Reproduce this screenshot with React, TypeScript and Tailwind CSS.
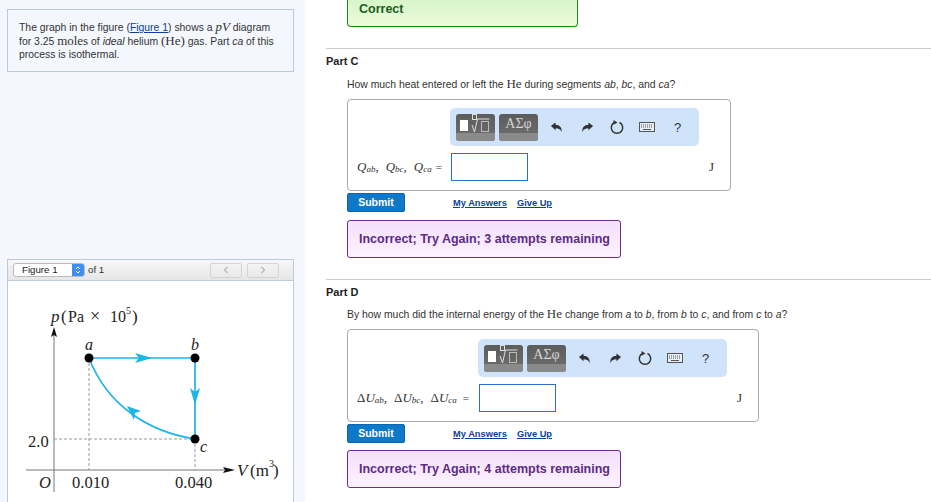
import React from "react";

const serif = "font-['Liberation_Serif',serif]";

function Toolbar() {
  return (
    <div className="h-[38px] w-[249px] rounded-[5px] bg-[#cfe4fb] flex items-center pl-[6px] text-[#333]">
      <div className="w-[39px] h-[27px] rounded-[3px] bg-gradient-to-b from-[#5c5c5c] to-[#707070] relative overflow-hidden">
        <div className="absolute left-0 right-0 bottom-0 h-[8px] bg-[#8a8a8a]" />
        <svg viewBox="0 0 39 27" className="absolute inset-0 w-[39px] h-[27px]">
          <rect x="4" y="6" width="8" height="11" fill="#fff" />
          <rect x="16.500" y=".5" width="4" height="5" fill="none" stroke="#ddd" />
          <path d="M16 11l2.500 7 3-13h12" fill="none" stroke="#ddd" strokeWidth="1" />
          <rect x="25.500" y="7.500" width="7" height="10" fill="none" stroke="#bbb" />
        </svg>
      </div>
      <div className={`ml-[4px] w-[39px] h-[27px] rounded-[3px] bg-gradient-to-b from-[#5c5c5c] to-[#707070] relative overflow-hidden text-center text-[#d5d5d5] text-[14px] leading-[20px] ${serif}`}>
        <div className="absolute left-0 right-0 bottom-0 h-[8px] bg-[#8a8a8a]" />
        <span className="relative">ΑΣφ</span>
      </div>
      <svg viewBox="0 0 14 14" className="ml-[12px] w-[13px] h-[13px]"><path d="M1 5.500L6 1.500v2.500c4.500 0 7 3 6.500 8-1-3-3-4.200-6.500-4.200V10z" fill="#333" /></svg>
      <svg viewBox="0 0 14 14" className="ml-[18px] w-[13px] h-[13px]"><path d="M13 5.500L8 1.500v2.500c-4.500 0-7 3-6.500 8 1-3 3-4.200 6.500-4.200V10z" fill="#333" /></svg>
      <svg viewBox="0 0 16 16" className="ml-[15px] w-[16px] h-[16px]"><path d="M10.500 3.500A5.700 5.700 0 1 1 5.500 3.500" fill="none" stroke="#333" strokeWidth="1.500" /><path d="M4.500 1l4 2.500-4 2.200z" fill="#333" /></svg>
      <svg viewBox="0 0 16 10" className="ml-[14px] w-[16px] h-[10px]"><rect x=".5" y=".5" width="15" height="9" fill="#e8eef5" stroke="#555" /><path d="M2 3h12M2 5h12" stroke="#555" strokeDasharray="1 1" /><path d="M4 7.500h8" stroke="#555" /></svg>
      <span className="ml-[19px] text-[13px] leading-none font-['Liberation_Sans',sans-serif]">?</span>
    </div>
  );
}

function Answer({ label, labelW, w, h, top }: { label: React.ReactNode; labelW: number; w: string; h: string; top: string }) {
  return (
    <div className={`${w} ${h} rounded-[4px] border border-[#aaa] flex flex-col`}>
      <div className={`${top} self-start`} style={{ marginLeft: labelW - 2 }}><Toolbar /></div>
      <div className="mt-[7px] flex items-center">
        <div className={`flex items-center whitespace-nowrap text-[13px] text-[#333] pl-[9px] ${serif}`} style={{ width: labelW - 1 }}>{label}</div>
        <div className="w-[77px] h-[28px] border border-[#2f6bc9] bg-white" />
        <span className={`ml-auto mr-[16px] text-[13px] text-[#333] ${serif}`}>J</span>
      </div>
    </div>
  );
}

function Sub({ children }: { children: React.ReactNode }) {
  return <sub className="text-[9px] italic align-baseline relative top-[2px] leading-none">{children}</sub>;
}

function Sep() {
  return <span className="mr-[7px]">,</span>;
}

function Actions() {
  return (
    <div className="mt-[2px] flex items-center h-[19px]">
      <div className="w-[58px] h-[19px] rounded-[2px] bg-[#0e78c9] border border-[#0a66ad] text-white font-bold text-[10.500px] leading-[17px] text-center">Submit</div>
      <a className="ml-[48px] mt-[2px] text-[#0b3f9b] underline font-bold text-[9.300px]">My Answers</a>
      <a className="ml-[10px] mt-[2px] text-[#0b3f9b] underline font-bold text-[9.300px]">Give Up</a>
    </div>
  );
}

function Incorrect({ n, mt }: { n: number; mt: string }) {
  return (
    <div className={`${mt} w-[274px] h-[38px] rounded-[3px] border border-[#6a2c91] bg-gradient-to-b from-[#f3dffa] to-[#fdf2ff] flex items-center pl-[11px] font-bold text-[12.500px] text-[#5b2c83]`}>
      Incorrect; Try Again; {n} attempts remaining
    </div>
  );
}

function He() {
  return <span className={`${serif} text-[13px] leading-[0]`}>He</span>;
}

function Graph() {
  const t = "'Liberation Serif', serif";
  return (
    <svg viewBox="8 281 284 221" className="w-[284px] h-[221px] block">
      <g fontFamily={t} fill="#222">
        <text x="51" y="322" fontSize="17" fontStyle="italic">p</text>
        <text x="61" y="322" fontSize="17">(</text>
        <text x="68" y="322" fontSize="16">Pa</text>
        <text x="90" y="322" fontSize="18">×</text>
        <text x="110" y="322" fontSize="16">10</text>
        <text x="126" y="314" fontSize="10">5</text>
        <text x="132" y="322" fontSize="17">)</text>
        <text x="85" y="350" fontSize="16" fontStyle="italic">a</text>
        <text x="191" y="350" fontSize="16" fontStyle="italic">b</text>
        <text x="200" y="452" fontSize="16" fontStyle="italic">c</text>
        <text x="28" y="447" fontSize="16.500">2.0</text>
        <text x="39" y="488" fontSize="16.500" fontStyle="italic">O</text>
        <text x="72" y="488" fontSize="16.500">0.010</text>
        <text x="175" y="488" fontSize="16.500">0.040</text>
        <text x="237" y="476" fontSize="17" fontStyle="italic">V</text>
        <text x="250" y="476" fontSize="17">(m</text>
        <text x="269" y="467" fontSize="10">3</text>
        <text x="273" y="476" fontSize="17">)</text>
      </g>
      <path d="M54 330V492M26 470H226" stroke="#777" strokeWidth="1" fill="none" />
      <path d="M54 327l-3 10 3-2 3 2z" fill="#111" />
      <path d="M235 470l-12-3 2 3-2 3z" fill="#111" />
      <path d="M89 358V470M195 439V470M54 439H195" stroke="#999" strokeWidth="1" strokeDasharray="3 2" fill="none" />
      <path d="M89 358H195V439C150 432 108 407 89 358" stroke="#1bb6e5" strokeWidth="1.700" fill="none" />
      <path d="M152 358l-17-5 4 5-4 5z" fill="#1bb6e5" />
      <path d="M195 405l-5-17 5 4 5-4z" fill="#1bb6e5" />
      <path d="M127 406l14 5-6 2-1 7z" fill="#1bb6e5" />
      <circle cx="89" cy="358" r="4.500" fill="#000" />
      <circle cx="195" cy="358" r="4.500" fill="#000" />
      <circle cx="195" cy="439" r="4.500" fill="#000" />
    </svg>
  );
}

export default function App() {
  const m = `${serif} text-[13px] leading-[0]`;
  return (
    <div className="w-[931px] h-[502px] overflow-hidden flex bg-white font-['Liberation_Sans',sans-serif] text-[#333] text-[10.400px]">
      <aside className="w-[305px] h-full bg-[#f4f8fe] pl-[7px] pt-[9px] shrink-0">
        <div className="w-[287px] h-[63px] border border-[#bccbdc] pl-[11px] pt-[11px] leading-[13.500px]">
          The graph in the figure (<a className="text-[#0b3f9b] underline">Figure 1</a>) shows a <span className={`${m} italic`}>pV</span> diagram
          <br />
          for 3.25 <span className={m}>moles</span> of <i>ideal</i> helium <span className={m}>(He)</span> gas. Part <i>ca</i> of this
          <br />
          process is isothermal.
        </div>
        <div className="mt-[187px] w-[287px] h-[244px] border border-[#bccbdc] bg-white">
          <div className="h-[21px] bg-gradient-to-b from-[#f7f7f7] to-[#e6e6e6] border-b border-[#bccbdc] flex items-center pl-[5px] pr-[14px]">
            <div className="w-[72px] h-[14px] rounded-[3px] border border-[#bbb] bg-white flex items-center relative overflow-hidden">
              <span className="pl-[8px] text-[9.700px] text-[#222]">Figure 1</span>
              <div className="absolute right-0 top-0 bottom-0 w-[12px] bg-[#3d8ef0] flex items-center justify-center">
                <svg viewBox="0 0 6 10" className="w-[6px] h-[10px]"><path d="M1 4l2-2 2 2M1 6l2 2 2-2" stroke="#fff" fill="none" /></svg>
              </div>
            </div>
            <span className="ml-[3px] text-[9.700px]">of 1</span>
            <div className="ml-auto w-[32px] h-[15px] border border-[#d4d4d4] rounded-[2px] flex items-center justify-center">
              <svg viewBox="0 0 6 8" className="w-[6px] h-[8px]"><path d="M4.500 1L1.500 4l3 3" stroke="#b5b5b5" strokeWidth="1.200" fill="none" /></svg>
            </div>
            <div className="ml-[5px] w-[32px] h-[15px] border border-[#d4d4d4] rounded-[2px] flex items-center justify-center">
              <svg viewBox="0 0 6 8" className="w-[6px] h-[8px]"><path d="M1.500 1l3 3-3 3" stroke="#b5b5b5" strokeWidth="1.200" fill="none" /></svg>
            </div>
          </div>
          <Graph />
        </div>
      </aside>
      <main className="flex-1 pl-[21px]">
        <div className="ml-[21px] w-[231px] h-[27px] rounded-b-[4px] border border-t-0 border-[#1c8a10] bg-gradient-to-b from-[#d7f5c8] to-[#ebfcdc] pl-[11px] font-bold text-[12.500px] text-[#1c5c1c] leading-[19px]">
          Correct
        </div>
        <section className="mt-[21px] border-t border-[#ccc] pt-[6px]">
          <h2 className="font-bold text-[11px] leading-[13px] text-[#222]">Part C</h2>
          <div className="ml-[21px]">
            <p className="mt-[10px] leading-[14px]">How much heat entered or left the <He /> during segments <i>ab</i>, <i>bc</i>, and <i>ca</i>?</p>
            <div className="mt-[7px]">
              <Answer
                w="w-[384px]"
                h="h-[92px]"
                top="mt-[8px]"
                labelW={104}
                label={<><i>Q</i><Sub>ab</Sub><Sep /><i>Q</i><Sub>bc</Sub><Sep /><i>Q</i><Sub>ca</Sub><span className="ml-[4px] text-[11px]">=</span></>}
              />
            </div>
            <Actions />
            <Incorrect n={3} mt="mt-[8px]" />
          </div>
        </section>
        <section className="mt-[21px] border-t border-[#ccc] pt-[6px]">
          <h2 className="font-bold text-[11px] leading-[13px] text-[#222]">Part D</h2>
          <div className="ml-[21px]">
            <p className="mt-[9px] leading-[14px]">By how much did the internal energy of the <He /> change from <i>a</i> to <i>b</i>, from <i>b</i> to <i>c</i>, and from <i>c</i> to <i>a</i>?</p>
            <div className="mt-[7px]">
              <Answer
                w="w-[412px]"
                h="h-[93px]"
                top="mt-[9px]"
                labelW={132}
                label={<>Δ<i>U</i><Sub>ab</Sub><Sep />Δ<i>U</i><Sub>bc</Sub><Sep />Δ<i>U</i><Sub>ca</Sub><span className="ml-[6px] text-[11px]">=</span></>}
              />
            </div>
            <Actions />
            <Incorrect n={4} mt="mt-[7px]" />
          </div>
        </section>
      </main>
    </div>
  );
}
